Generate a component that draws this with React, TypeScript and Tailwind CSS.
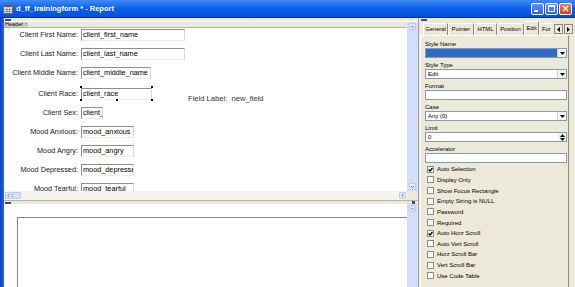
import React from "react";

type Row = {
  label: string;
  value: string;
  width: string;
  extra?: string;
  selected?: boolean;
};

const rows: Row[] = [
  { label: "Client First Name:", value: "client_first_name", width: "w-[104px]" },
  { label: "Client Last Name:", value: "client_last_name", width: "w-[104px]" },
  { label: "Client Middle Name:", value: "client_middle_name", width: "w-[70px]" },
  { label: "Client Race:", value: "client_race", width: "w-[71px]", extra: "mt-[2px]", selected: true },
  { label: "Client Sex:", value: "client_", width: "w-[22px]" },
  { label: "Mood Anxious:", value: "mood_anxious", width: "w-[53px]" },
  { label: "Mood Angry:", value: "mood_angry", width: "w-[53px]" },
  { label: "Mood Depressed:", value: "mood_depressed", width: "w-[53px]" },
  { label: "Mood Tearful:", value: "mood_tearful", width: "w-[53px]" },
];

const checks = [
  { label: "Auto Selection", on: true },
  { label: "Display Only", on: false },
  { label: "Show Focus Rectangle", on: false },
  { label: "Empty String is NULL", on: false },
  { label: "Password", on: false },
  { label: "Required", on: false },
  { label: "Auto Horz Scroll", on: true },
  { label: "Auto Vert Scroll", on: false },
  { label: "Horz Scroll Bar", on: false },
  { label: "Vert Scroll Bar", on: false },
  { label: "Use Code Table", on: false },
];

const tabs = [
  { label: "General", width: "w-[25px]" },
  { label: "Pointer", width: "w-[26px]" },
  { label: "HTML", width: "w-[23px]" },
  { label: "Position", width: "w-[27px]" },
];

function Chevron({ dir }: { dir: "up" | "down" | "left" | "right" }) {
  const d = {
    up: "M1.5 5 L3.5 3 L5.5 5",
    down: "M1.5 3 L3.5 5 L5.5 3",
    left: "M4.5 1.5 L2.5 3.5 L4.5 5.5",
    right: "M2.5 1.5 L4.5 3.5 L2.5 5.5",
  }[dir];
  return (
    <svg width="7" height="7" viewBox="0 0 7 7">
      <path d={d} fill="none" stroke="#4d6185" strokeWidth="1.3" />
    </svg>
  );
}

function ScrollBtn({ dir }: { dir: "up" | "down" | "left" | "right" }) {
  return (
    <div className="flex h-[7px] w-[7px] shrink-0 items-center justify-center rounded-[1px] border border-[#b7c9f3] bg-[#e2eafc]">
      <Chevron dir={dir} />
    </div>
  );
}

function VScroll({ down = true }: { down?: boolean }) {
  return (
    <div className="flex w-[11px] shrink-0 flex-col items-center justify-between bg-[#d3def8] py-[1px]">
      <ScrollBtn dir="up" />
      {down ? <ScrollBtn dir="down" /> : null}
    </div>
  );
}

function SplitMark() {
  return <div className="h-[2px] w-[6px] bg-[#4a4a6a]" />;
}

function Handle({ pos }: { pos: string }) {
  return <div className={`absolute h-[2px] w-[2px] bg-black ${pos}`} />;
}

function TitleBar() {
  return (
    <div className="flex h-[18px] items-center border-b border-[#0a2f9a] bg-gradient-to-b from-[#3d8cf7] via-[#0a5fe8] to-[#0550dc] pl-[3px] pr-[3px]">
      <svg width="10" height="10" viewBox="0 0 10 10" className="shrink-0">
        <rect x="0.5" y="0.5" width="9" height="9" fill="#e8e8e8" stroke="#6b6b6b" />
        <rect x="1" y="1" width="8" height="2" fill="#3b5fb0" />
        <path d="M1 5.5 H9 M1 7.5 H9 M4 3 V9 M6.5 3 V9" stroke="#7a7a7a" strokeWidth="0.7" />
      </svg>
      <span className="ml-[3px] text-[7.5px] font-bold leading-none text-white">d_ff_trainingform * - Report</span>
      <div className="ml-auto flex items-center gap-[1px]">
        <div className="flex h-[12px] w-[13px] items-end rounded-[2px] border border-white bg-gradient-to-b from-[#5b98fb] to-[#2a62e8] px-[2px] pb-[2px]">
          <div className="h-[2px] w-[4px] bg-white" />
        </div>
        <div className="flex h-[12px] w-[13px] items-center justify-center rounded-[2px] border border-white bg-gradient-to-b from-[#5b98fb] to-[#2a62e8]">
          <div className="h-[7px] w-[7px] border border-t-2 border-white" />
        </div>
        <div className="flex h-[12px] w-[13px] items-center justify-center rounded-[2px] border border-white bg-gradient-to-b from-[#ee7a55] to-[#d2401e]">
          <svg width="7" height="7" viewBox="0 0 7 7">
            <path d="M1 1 L6 6 M6 1 L1 6" stroke="white" strokeWidth="1.5" />
          </svg>
        </div>
      </div>
    </div>
  );
}

function FormCanvas() {
  return (
    <div className="relative flex-1 overflow-hidden bg-white pt-[1px] text-[7.3px] leading-none text-black">
      <div className="flex flex-col gap-[7px]">
        {rows.map((row) => (
          <div key={row.label} className={`flex h-[12px] items-center ${row.extra ?? ""}`}>
            <div className="w-[74px] shrink-0 whitespace-nowrap text-right text-[#222]">{row.label}</div>
            <div
              className={`relative ml-[3px] flex h-[12px] shrink-0 items-center border-t border-l border-r border-b border-t-[#8f8f8f] border-l-[#8f8f8f] border-r-[#d6d6d6] border-b-[#eeeeee] pl-[1px] ${row.width}`}
            >
              <span className="overflow-hidden whitespace-nowrap">{row.value}</span>
              {row.selected ? (
                <>
                  <Handle pos="-left-[2px] -top-[3px]" />
                  <Handle pos="-right-[2px] -top-[3px]" />
                  <Handle pos="-left-[2px] -bottom-[2px]" />
                  <Handle pos="left-[34px] -bottom-[2px]" />
                  <Handle pos="-right-[2px] -bottom-[2px]" />
                </>
              ) : null}
            </div>
          </div>
        ))}
      </div>
      <div className="absolute left-[184px] top-[67px] whitespace-pre text-[7.6px] text-[#333]">Field Label:  new_field</div>
    </div>
  );
}

function Dropdown({ value, selected = false }: { value?: string; selected?: boolean }) {
  return (
    <div className="flex h-[10px] items-stretch border border-[#7f9db9] bg-white">
      <div className={`flex flex-1 items-center pl-[2px] ${selected ? "bg-[#316ac5]" : "bg-white"}`}>
        <span className="text-[6px] leading-none">{value}</span>
      </div>
      <div className="flex w-[9px] items-center justify-center border-l border-[#d8d4c8] bg-[#f4f3ee]">
        <svg width="5" height="3" viewBox="0 0 5 3">
          <path d="M0 0 H5 L2.5 3 Z" fill="#000" />
        </svg>
      </div>
    </div>
  );
}

function TextBox({ value }: { value?: string }) {
  return (
    <div className="flex h-[10px] items-center border border-[#7f9db9] bg-white pl-[2px]">
      <span className="text-[6px] leading-none">{value}</span>
    </div>
  );
}

function Spinner({ value }: { value: string }) {
  return (
    <div className="flex h-[10px] items-stretch border border-[#7f9db9] bg-white">
      <div className="flex flex-1 items-center pl-[2px]">
        <span className="text-[6px] leading-none">{value}</span>
      </div>
      <div className="flex w-[8px] flex-col items-center justify-center gap-[1px] bg-[#f4f3ee]">
        <svg width="5" height="3" viewBox="0 0 5 3">
          <path d="M0 3 H5 L2.5 0 Z" fill="#000" />
        </svg>
        <svg width="5" height="3" viewBox="0 0 5 3">
          <path d="M0 0 H5 L2.5 3 Z" fill="#000" />
        </svg>
      </div>
    </div>
  );
}

function Field({ label, children }: { label: string; children: React.ReactNode }) {
  return (
    <div className="mb-[3px]">
      <div className="flex h-[8px] items-center text-[6px] leading-none">{label}</div>
      {children}
    </div>
  );
}

function PropertyPanel() {
  return (
    <div className="flex flex-1 flex-col border-l border-[#a0a0a0] bg-[#ece9d8]">
      <div className="flex h-[3px] items-center pl-[2px]">
        <SplitMark />
      </div>
      <div className="flex h-[14px] items-end pl-[4px] text-[5.8px] leading-none text-black">
        {tabs.map((tab) => (
          <div
            key={tab.label}
            className={`flex h-[12px] shrink-0 items-center justify-center border-t border-l border-r border-t-white border-l-white border-r-[#8a8a8a] ${tab.width}`}
          >
            {tab.label}
          </div>
        ))}
        <div className="flex h-[14px] w-[15px] shrink-0 items-center justify-center border-t border-l border-r border-t-white border-l-white border-r-[#8a8a8a] bg-[#ece9d8]">
          Edit
        </div>
        <div className="flex h-[12px] w-[14px] shrink-0 items-center overflow-hidden border-t border-l border-t-white border-l-white pl-[2px]">
          For
        </div>
        <div className="mb-[1px] ml-[1px] flex h-[10px] gap-[1px]">
          <div className="flex w-[9px] items-center justify-center border border-[#8a8a8a] bg-[#ece9d8]">
            <svg width="3" height="5" viewBox="0 0 3 5">
              <path d="M3 0 V5 L0 2.5 Z" fill="#000" />
            </svg>
          </div>
          <div className="flex w-[9px] items-center justify-center border border-[#8a8a8a] bg-[#ece9d8]">
            <svg width="3" height="5" viewBox="0 0 3 5">
              <path d="M0 0 V5 L3 2.5 Z" fill="#000" />
            </svg>
          </div>
        </div>
      </div>
      <div className="flex flex-1 flex-col border-l border-r border-t border-l-white border-r-[#8a8a8a] border-t-white ml-[1px] mr-[6px] pl-[4px] pr-[1px] pt-[4px] text-black">
        <Field label="Style Name">
          <Dropdown selected />
        </Field>
        <Field label="Style Type">
          <Dropdown value="Edit" />
        </Field>
        <Field label="Format">
          <TextBox />
        </Field>
        <Field label="Case">
          <Dropdown value="Any (0)" />
        </Field>
        <Field label="Limit">
          <Spinner value="0" />
        </Field>
        <Field label="Accelerator">
          <TextBox />
        </Field>
        <div className="-mt-[2px] flex flex-col">
          {checks.map((c) => (
            <div key={c.label} className="flex h-[10.65px] items-center">
              <div className="ml-[2px] flex h-[7px] w-[7px] shrink-0 items-center justify-center border border-[#8d8d8d] bg-white">
                {c.on ? (
                  <svg width="5" height="5" viewBox="0 0 5 5">
                    <path d="M0.5 2.5 L2 4 L4.5 1" fill="none" stroke="#000" strokeWidth="1.2" />
                  </svg>
                ) : null}
              </div>
              <span className="ml-[3px] whitespace-nowrap text-[6px] leading-none">{c.label}</span>
            </div>
          ))}
        </div>
      </div>
    </div>
  );
}

export default function App() {
  return (
    <div className="flex h-[287px] w-[575px] flex-col overflow-hidden bg-[#ece9d8] font-['Liberation_Sans',Arial,sans-serif]">
      <TitleBar />
      <div className="flex flex-1 overflow-hidden">
        <div className="w-[4px] shrink-0 bg-gradient-to-r from-[#0a3fc8] to-[#2a66e0]" />
        <div className="flex w-[414px] shrink-0 flex-col">
          <div className="flex h-[3px] items-center bg-[#ece9d8] pl-[1px]">
            <SplitMark />
          </div>
          <div className="h-[1px] bg-white" />
          <div className="flex h-[169px]">
            <div className="flex flex-1 flex-col">
              <div className="flex h-[6px] items-stretch border-b border-[#b8b4a8] bg-[#ece9d8]">
                <div className="flex w-[24px] items-center bg-[#d4d0c8] pl-[1px] text-[5.5px] leading-none">Header ↑</div>
              </div>
              <FormCanvas />
            </div>
            <VScroll />
          </div>
          <div className="flex h-[9px]">
            <div className="flex flex-1 items-center justify-between bg-[#f4f3ee] px-[1px]">
              <div className="flex items-center">
                <ScrollBtn dir="left" />
                <div className="h-[7px] w-[9px] rounded-[1px] border border-[#b7c9f3] bg-[#d3def8]" />
              </div>
              <ScrollBtn dir="right" />
            </div>
            <div className="w-[11px] bg-[#ece9d8]" />
          </div>
          <div className="flex h-[4px] items-center border-t border-[#b8b4a8] bg-[#ece9d8] pl-[1px]">
            <SplitMark />
            <div className="ml-auto mr-[3px] h-[3px] w-[3px] bg-[#1f4fc9]" />
          </div>
          <div className="flex flex-1 overflow-hidden">
            <div className="flex flex-1 overflow-hidden bg-white pl-[13px] pt-[13px]">
              <div className="flex-1 border-l border-t border-[#8282b0]" />
            </div>
            <VScroll down={false} />
          </div>
        </div>
        <PropertyPanel />
      </div>
    </div>
  );
}
